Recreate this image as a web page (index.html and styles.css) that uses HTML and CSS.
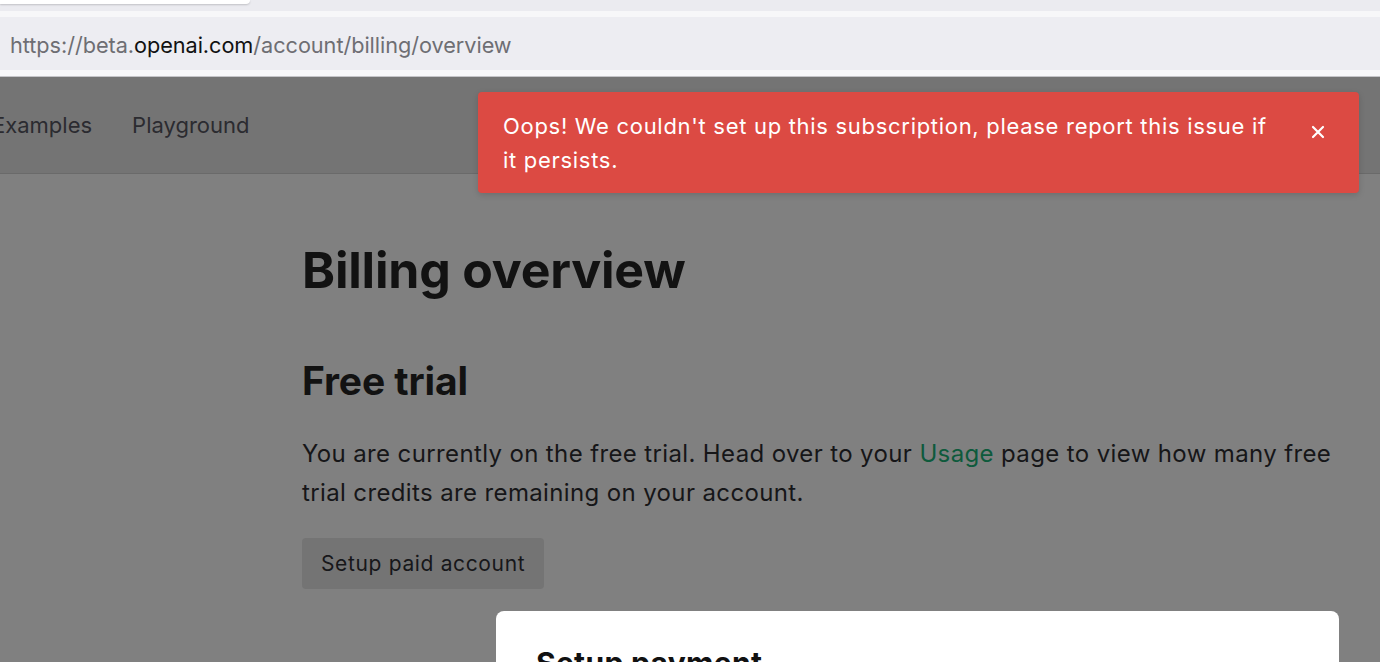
FILE: index.html
```html
<!DOCTYPE html>
<html lang="en">
<head>
    <meta charset="UTF-8">
    <meta name="viewport" content="width=device-width, initial-scale=1.0">
    <title>Billing overview</title>
    <link rel="stylesheet" href="styles.css">
</head>
<body>
    <div class="browser-top">
        <div class="tab"></div>
    </div>
    <div class="address-wrap">
        <div class="address-bar">
            <span class="url-dim">https://beta.</span><span class="url-host">openai.com</span><span class="url-dim">/account/billing/overview</span>
        </div>
    </div>

    <div class="page">
        <nav class="top-nav">
            <a href="#" class="nav-link first">Examples</a>
            <a href="#" class="nav-link">Playground</a>
        </nav>

        <main class="content">
            <h1>Billing overview</h1>
            <h2>Free trial</h2>
            <p class="intro">You are currently on the free trial. Head over to your <a href="#" class="usage-link">Usage</a> page to view how many free trial credits are remaining on your account.</p>
            <button type="button" class="btn-setup">Setup paid account</button>
        </main>

        <div class="modal-card">
            <h3>Setup payment</h3>
        </div>

        <div class="toast">
            <p class="toast-text">Oops! We couldn't set up this subscription, please report this issue if it persists.</p>
            <button type="button" class="toast-close" aria-label="Close">
                <svg width="14" height="14" viewBox="0 0 14 14">
                    <path d="M2 2 L12 12 M12 2 L2 12" stroke="#fff" stroke-width="2.2" stroke-linecap="round"/>
                </svg>
            </button>
        </div>
    </div>
</body>
</html>
```

FILE: styles.css
```css
body {
    margin: 0;
    padding: 0;
    font-family: Inter, "Noto Sans", sans-serif;
    background-color: #808080;
    overflow: hidden;
}

/* browser chrome */
.browser-top {
    height: 11px;
    background-color: #ebebf0;
}
.tab {
    width: 250px;
    height: 4px;
    background-color: #fff;
    border-bottom-right-radius: 6px;
    box-shadow: 0 1px 2px rgba(0, 0, 0, 0.18);
}
.address-wrap {
    background-color: #f7f7f9;
    padding: 6px 0;
    border-bottom: 1px solid #c4c4c8;
}
.address-bar {
    height: 53px;
    background-color: #ededf2;
    display: flex;
    align-items: center;
    padding: 3px 0 0 10px;
    box-sizing: border-box;
    font-size: 21.7px;
    letter-spacing: -0.05px;
}
.url-dim {
    color: #6e6e73;
}
.url-host {
    color: #111;
}

/* page under the modal backdrop */
.page {
    position: relative;
    height: 585px;
}
.top-nav {
    height: 97px;
    background-color: #747474;
    border-bottom: 1px solid #6a6a6a;
    display: flex;
    align-items: center;
    gap: 40px;
    box-sizing: border-box;
}
.nav-link {
    color: #2b2b30;
    text-decoration: none;
    font-size: 22px;
}
.nav-link.first {
    margin-left: -8px;
}

.content {
    padding-left: 302px;
    padding-top: 65px;
    width: 1040px;
}
.content h1 {
    margin: 0;
    font-size: 50px;
    font-weight: 700;
    line-height: 62px;
    color: #121212;
    letter-spacing: -0.2px;
}
.content h2 {
    margin: 57px 0 0;
    font-size: 39px;
    font-weight: 700;
    line-height: 46px;
    color: #121212;
    letter-spacing: -0.1px;
}
.intro {
    margin: 30px 0 0;
    font-size: 24px;
    line-height: 39px;
    letter-spacing: 0.37px;
    color: #161618;
}
.usage-link {
    color: #0e5a3c;
    text-decoration: none;
}
.btn-setup {
    margin-top: 26px;
    height: 51px;
    padding: 0 19px;
    border: none;
    border-radius: 4px;
    background-color: #747474;
    color: #17171a;
    font-family: inherit;
    font-size: 21px;
    letter-spacing: 0.65px;
}

/* modal card, mostly off screen */
.modal-card {
    position: absolute;
    left: 496px;
    top: 534px;
    width: 843px;
    height: 200px;
    background-color: #fff;
    border-radius: 8px;
    box-sizing: border-box;
    padding: 34px 40px;
}
.modal-card h3 {
    margin: 0;
    font-size: 30px;
    font-weight: 700;
    letter-spacing: 0.3px;
    color: #111;
}

/* error toast */
.toast {
    position: absolute;
    left: 478px;
    top: 15px;
    width: 881px;
    box-sizing: border-box;
    padding: 17px 26px 16px 25px;
    background-color: #dc4a43;
    border-radius: 4px;
    box-shadow: 0 2px 6px rgba(0, 0, 0, 0.15);
    display: flex;
    align-items: flex-start;
    gap: 20px;
}
.toast-text {
    margin: 0;
    flex: 1;
    max-width: 785px;
    color: #fff;
    font-size: 22px;
    line-height: 34px;
    letter-spacing: 0.7px;
}
.toast-close {
    margin: 8px 0 0 auto;
    padding: 0;
    border: none;
    background: none;
    cursor: pointer;
    width: 30px;
    height: 30px;
    display: flex;
    align-items: center;
    justify-content: center;
}
```
